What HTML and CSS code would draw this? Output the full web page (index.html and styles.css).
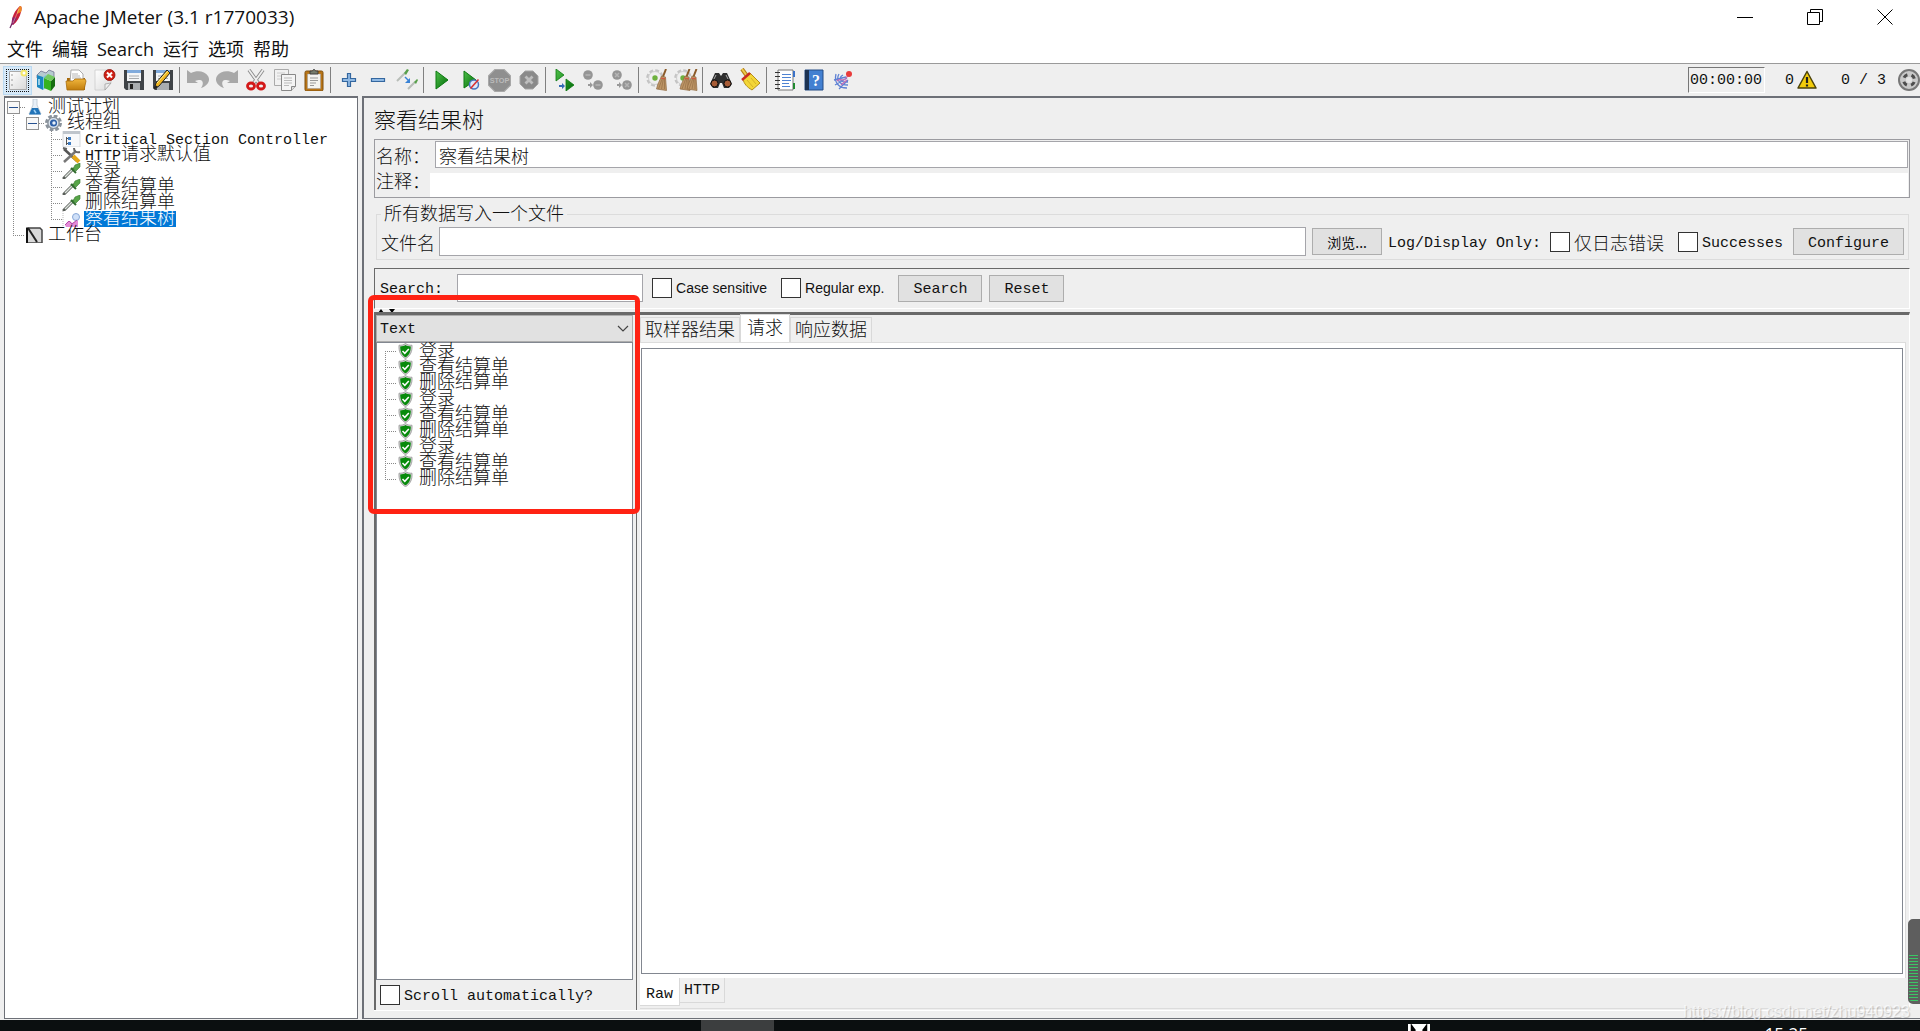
FILE: index.html
```html
<!DOCTYPE html>
<html lang="zh-CN">
<head>
    <meta charset="UTF-8">
    <meta name="viewport" content="width=device-width, initial-scale=1.0">
    <title>Apache JMeter (3.1 r1770033)</title>
    <link rel="stylesheet" href="styles.css">
</head>
<body>
    <!-- Shared icons -->
    <svg class="sprite" aria-hidden="true">
        <defs>
            <linearGradient id="g-green" x1="0" y1="0" x2="1" y2="1"><stop offset="0" stop-color="#4fc04a"/><stop offset="1" stop-color="#016b08"/></linearGradient>
            <linearGradient id="g-gold" x1="0" y1="0" x2="0" y2="1"><stop offset="0" stop-color="#f0b53c"/><stop offset="1" stop-color="#c07d0d"/></linearGradient>
            <linearGradient id="g-page" x1="0" y1="0" x2="1" y2="1"><stop offset="0" stop-color="#fff"/><stop offset="1" stop-color="#d9d9d9"/></linearGradient>
        </defs>
        <symbol id="pipette" viewBox="0 0 19 16">
            <path d="M2 15l9-9" stroke="#5a5f5a" stroke-width="3" stroke-linecap="round"/>
            <path d="M3 14l8-8" stroke="#dfe5df" stroke-width="1.4"/>
            <path d="M9 5l5 5" stroke="#2f6b2c" stroke-width="2"/>
            <path d="M11 6l2-4 5-2v4l-4 4z" fill="#57a548" stroke="#35752d" stroke-width=".6"/>
        </symbol>
        <symbol id="shield" viewBox="0 0 16 16">
            <path d="M8 .5c2 1.500 4 1.800 6.500 1.700C15 8 13 13 8 15.700 3 13 1 8 1.500 2.200 4 2.300 6 2 8 .5z" fill="#ccc" stroke="#999" stroke-width=".8"/>
            <path d="M8 2c1.500 1 3 1.400 5.300 1.400C13.300 8 12 12 8 14.300 4 12 2.700 8 2.700 3.400 5 3.400 6.500 3 8 2z" fill="#078a0b"/>
            <path d="M5 8l2.300 2.300L11.300 6" fill="none" stroke="#fff" stroke-width="1.500"/>
        </symbol>
        <symbol id="gear" viewBox="0 0 20 17">
            <circle cx="10" cy="8.500" r="7.500" fill="none" stroke="#8b939c" stroke-width="3" stroke-dasharray="3.900 1.990"/>
            <circle cx="10" cy="8.500" r="6" fill="#dbe4ee" stroke="#8b939c" stroke-width="1.500"/>
            <circle cx="10" cy="8.500" r="3.800" fill="#2e60a8"/><circle cx="10.500" cy="8.500" r="1.800" fill="#e8f0fa"/>
        </symbol>
        <symbol id="gear-pale" viewBox="0 0 20 20">
            <circle cx="10" cy="10" r="8.200" fill="none" stroke="#c4c4c4" stroke-width="3" stroke-dasharray="4.200 2.240"/>
            <circle cx="10" cy="10" r="7.200" fill="#efefef" stroke="#ccc"/><circle cx="10" cy="10" r="3" fill="#6db13e"/>
        </symbol>
        <symbol id="broom" viewBox="0 0 12 22">
            <path d="M10.500 0L7 9" stroke="#8a5a28" stroke-width="2"/>
            <path d="M6 7l4 1 1 13.500L1 20C2 15 4 12 6 7z" fill="#bd9566" stroke="#8f6a42" stroke-width=".7"/>
            <path d="M7 9L3 20M8 9l-2 11M9 9v11" stroke="#8d6a42" stroke-width=".6"/>
            <path d="M5.500 9l4.500 1" stroke="#d9503a"/>
        </symbol>
        <symbol id="chart" viewBox="0 0 20 20">
            <path d="M3 4c-2 8 2 14 11 14M6 4C3 9 6 15 15 15M10 5c-5 3-3 8 5 7M1 10l12-3M2 15l12-7M6 19l9-9" fill="none" stroke="#5f82d4" stroke-width="1.300"/>
            <path d="M4 11c4-4 7 3 11-6M8 15l6-5" fill="none" stroke="#c76fb4" stroke-width="1.200"/>
            <circle cx="16" cy="4" r="3" fill="#e93b3b"/>
        </symbol>
    </svg>

    <header class="title-bar">
        <svg class="feather" width="16" height="24" viewBox="0 0 16 24"><path d="M2 23L6 14" stroke="#6b2163" stroke-width="1.200"/><path d="M4 19c-1-6 3-14 8-18 2 0 2 3 1 6-1 5-4 10-8 13z" fill="#c8203c"/><path d="M12 1c2 0 2 3 1 6L9 9c0-3 1-6 3-8z" fill="#ee8b22"/><path d="M4 19c-.5-3 0-5 1-7l4 1-4 7z" fill="#8b246e"/><path d="M11 4L5 18" stroke="#f0c6b0" stroke-width=".5"/></svg>
        <span class="title">Apache JMeter (3.1 r1770033)</span>
        <div class="window-buttons">
            <button aria-label="Minimize"><svg width="16" height="16" viewBox="0 0 16 16"><path d="M0 8.500h16" stroke="#000"/></svg></button>
            <button aria-label="Restore"><svg width="16" height="16" viewBox="0 0 16 16"><path d="M.5 3.500h12v12H.5zM3.500 3.500v-3h12v12h-3" fill="none" stroke="#000"/></svg></button>
            <button aria-label="Close"><svg width="16" height="16" viewBox="0 0 16 16"><path d="M.5.5l15 15M15.500.5l-15 15" stroke="#000"/></svg></button>
        </div>
    </header>

    <nav class="menu-bar">
        <button>文件</button>
        <button>编辑</button>
        <button>Search</button>
        <button>运行</button>
        <button>选项</button>
        <button>帮助</button>
    </nav>

    <div class="toolbar">
        <button class="focused" aria-label="New"><svg width="22" height="22" viewBox="0 0 22 22"><path d="M2.500 2.500h17v18h-17z" fill="url(#g-page)" stroke="#aaa"/><path d="M5 5v2M5 10v2M5 15v2" stroke="#999"/><circle cx="17" cy="4" r="3.500" fill="#f5e86b"/><circle cx="17" cy="4" r="1.500" fill="#fff"/></svg></button>
        <button aria-label="Templates"><svg width="22" height="22" viewBox="0 0 22 22"><path d="M1 6l4-4 5 2 3-3 5 2v6H1z" fill="#b7cbd0" stroke="#668" stroke-width=".7"/><path d="M1 6l6 2v13l-6-3z" fill="#1b86c0"/><path d="M7 8l3-2v13l-3 2z" fill="#7bc3e0"/><path d="M8 9l7 3v10l-7-3z" fill="#35b31f"/><path d="M15 12l4-4v9l-4 5z" fill="#176d12"/><path d="M8 9l4-4 7 3-4 4z" fill="#74c960"/><path d="M3 10v6" stroke="#bfe6f5" stroke-width="1.500"/></svg></button>
        <button aria-label="Open"><svg width="22" height="22" viewBox="0 0 22 22"><path d="M2 9h18v12H2z" fill="#a96a0b"/><path d="M6 1h8l4 4v9H5z" fill="#fff" stroke="#aaa"/><path d="M7 5h6M7 7h8M7 9h9" stroke="#b5b5b5"/><path d="M1 12h7l2-2h10l1 2-2 9H2z" fill="url(#g-gold)" stroke="#a86c0c" stroke-width=".8"/></svg></button>
        <button aria-label="Close"><svg width="22" height="22" viewBox="0 0 22 22"><path d="M1 1h16v13l-6 7H1z" fill="url(#g-page)" stroke="#ccc" stroke-width=".8"/><path d="M17 14l-6 7v-6z" fill="#eee" stroke="#999" stroke-width=".7"/><circle cx="15.500" cy="6" r="5.500" fill="#cf1f14" stroke="#8f100a" stroke-width=".8"/><path d="M13 3.500l5 5M18 3.500l-5 5" stroke="#fff" stroke-width="2"/></svg></button>
        <button aria-label="Save"><svg width="22" height="22" viewBox="0 0 22 22"><path d="M1 1h20v20H3l-2-2z" fill="#3f4347"/><path d="M4 1h14v11H4z" fill="#f3f5f7"/><path d="M4 1h14v3H4z" fill="#7faadc"/><path d="M6 7h10M6 9.500h10" stroke="#a6aaae"/><path d="M5 14h12v7H5z" fill="#a9adb0"/><path d="M7 15h3v5H7z" fill="#222"/></svg></button>
        <button aria-label="Save as"><svg width="22" height="22" viewBox="0 0 22 22"><path d="M1 1h20v20H3l-2-2z" fill="#3f4347"/><path d="M4 1h14v11H4z" fill="#f3f5f7"/><path d="M4 1h14v3H4z" fill="#7faadc"/><path d="M6 7h10M6 9.500h10" stroke="#a6aaae"/><path d="M5 14h12v7H5z" fill="#a9adb0"/><path d="M2 20l2-6L15 1l3 3L7 17z" fill="#f0b51f" stroke="#222"/><path d="M5 14L16 2" stroke="#fff08a"/><path d="M2 20l1.500-4L6 18z" fill="#222"/></svg></button>
        <span class="sep"></span>
        <button aria-label="Undo"><svg width="22" height="22" viewBox="0 0 22 22"><path d="M0 1l4 3c6-3 14-2 17 3 3 5-1 10-7 12 3-4 2-8-1-8-2 0-3 0-5 1l3 2H0z" fill="#a8a8a8"/></svg></button>
        <button aria-label="Redo"><svg width="22" height="22" viewBox="0 0 22 22"><path d="M22 1l-4 3C12 1 4 2 1 7c-3 5 1 10 7 12-3-4-2-8 1-8 2 0 3 0 5 1l-3 2h11z" fill="#a8a8a8"/></svg></button>
        <button aria-label="Cut"><svg width="22" height="22" viewBox="0 0 22 22"><path d="M4 1l10 14M18 1L8 15" stroke="#888" stroke-width="3.500"/><path d="M4 1l10 14M18 1L8 15" stroke="#eee" stroke-width="1.800"/><ellipse cx="6" cy="17" rx="3.500" ry="3" fill="none" stroke="#d31919" stroke-width="2.800"/><ellipse cx="16" cy="17" rx="3.500" ry="3" fill="none" stroke="#d31919" stroke-width="2.800"/></svg></button>
        <button aria-label="Copy"><svg width="22" height="22" viewBox="0 0 22 22"><path d="M.5.5h14v16H.5z" fill="#f1f1f1" stroke="#aaa"/><path d="M3 4h8M3 7h8M3 10h8" stroke="#ccc"/><path d="M7.500 5.500h14v12l-4 4h-10z" fill="#f4f4f4" stroke="#888"/><path d="M10 9h8M10 11.500h8M10 14h8M10 16.500h5" stroke="#bbb"/><path d="M21.500 17.500h-4v4" fill="#ddd" stroke="#888"/></svg></button>
        <button aria-label="Paste"><svg width="22" height="22" viewBox="0 0 22 22"><rect x="2" y="2" width="18" height="20" rx="1.500" fill="#b97516" stroke="#80500c"/><path d="M4.500 5h13v14.500h-13z" fill="#f4f4f0" stroke="#999" stroke-width=".5"/><path d="M7 9h8M7 11.500h8M7 14h6M7 16.500h4" stroke="#999"/><path d="M7 5V2h2.500l1-1.500h1l1 1.500H15v3z" fill="#777d6d" stroke="#333" stroke-width=".8"/></svg></button>
        <span class="sep"></span>
        <button aria-label="Expand all"><svg width="16" height="16" viewBox="0 0 16 16"><path d="M6.500 1.500h3v5h5v3h-5v5h-3v-5h-5v-3h5z" fill="#8fb9e4" stroke="#34679f" stroke-width="1.200"/></svg></button>
        <button aria-label="Collapse all"><svg width="16" height="16" viewBox="0 0 16 16"><path d="M1.500 6.500h13v3h-13z" fill="#8fb9e4" stroke="#34679f" stroke-width="1.200"/></svg></button>
        <button aria-label="Toggle"><svg width="22" height="22" viewBox="0 0 22 22"><path d="M1 12l8-8M12 20l7-7" stroke="#b9beb9" stroke-width="2"/><path d="M8 4l3-4 2 1-3 5zM18 13l3-3 1 1-2 4z" fill="#58a04b"/><path d="M9 8l4 4" stroke="#3a83d6" stroke-width="1.500"/><path d="M14 9v5H9z" fill="#3a83d6"/></svg></button>
        <span class="sep"></span>
        <button aria-label="Start"><svg width="20" height="20" viewBox="0 0 20 20"><path d="M4 1l12 9L4 19z" fill="url(#g-green)" stroke="#0c7a10"/></svg></button>
        <button aria-label="Start no pauses"><svg width="20" height="20" viewBox="0 0 20 20"><path d="M3 1l12 9L3 18z" fill="url(#g-green)" stroke="#0c7a10"/><circle cx="13" cy="14.500" r="4.500" fill="#dce8fa" stroke="#4775bf" stroke-width="1.500"/><path d="M9.500 18.500l8-9" stroke="#d93232" stroke-width="1.600"/></svg></button>
        <button aria-label="Stop"><svg width="23" height="23" viewBox="0 0 22 22"><path d="M6.500.5h9l6 6v9l-6 6h-9l-6-6v-9z" fill="#8f8f8f" stroke="#a8a8a8"/><text x="11" y="13.500" class="stop-text">STOP</text></svg></button>
        <button aria-label="Shutdown"><svg width="20" height="20" viewBox="0 0 20 20"><path d="M6 1h8l5 5v8l-5 5H6l-5-5V6z" fill="#8a8a8a" stroke="#a5a5a5"/><path d="M6.500 6.500l7 7M13.500 6.500l-7 7" stroke="#bdbdbd" stroke-width="2.800"/></svg></button>
        <span class="sep"></span>
        <button aria-label="Remote start all"><svg width="22" height="22" viewBox="0 0 22 22"><path d="M3 0l8 6-8 6zM13 10l8 6-8 6z" fill="url(#g-green)" stroke="#0c7a10" stroke-width=".8"/><path d="M6 14v2h3v-2l3 3-3 3v-2H6z" fill="#346bb5"/></svg></button>
        <button aria-label="Remote stop all"><svg width="22" height="22" viewBox="0 0 22 22"><circle cx="6" cy="6" r="4.800" fill="#959595"/><circle cx="16" cy="16" r="4.800" fill="#959595"/><path d="M3.500 6h5M13.500 16h5" stroke="#b5b5b5" stroke-width="1.500"/><path d="M6 13v2h2v-2l3 3-3 3v-2H6z" fill="#999"/></svg></button>
        <button aria-label="Remote shutdown all"><svg width="22" height="22" viewBox="0 0 22 22"><circle cx="6" cy="6" r="4.800" fill="#959595"/><circle cx="16" cy="16" r="4.800" fill="#959595"/><path d="M4 4l4 4M8 4L4 8M14 14l4 4M18 14l-4 4" stroke="#b5b5b5" stroke-width="1.500"/><path d="M6 13v2h2v-2l3 3-3 3v-2H6z" fill="#999"/></svg></button>
        <span class="sep"></span>
        <button aria-label="Clear"><svg width="22" height="24" viewBox="0 0 22 24"><use href="#gear-pale" x="0" y="1" width="18" height="18"/><use href="#broom" x="9" y="1" width="13" height="22"/></svg></button>
        <button aria-label="Clear all"><svg width="24" height="24" viewBox="0 0 24 24"><use href="#gear-pale" x="0" y="1" width="18" height="18"/><use href="#broom" x="5" y="1" width="12" height="22"/><use href="#broom" x="12" y="1" width="12" height="22"/></svg></button>
        <span class="sep"></span>
        <button aria-label="Search"><svg width="24" height="20" viewBox="0 0 24 20"><path d="M1 14L6 3h4l2 3 2-3h4l5 11-3 4h-5l-2-5h-2l-2 5H4z" fill="#2e2e2e"/><circle cx="5.500" cy="13.500" r="3.500" fill="#a85c36" stroke="#111"/><circle cx="18.500" cy="13.500" r="3.500" fill="#a85c36" stroke="#111"/><path d="M7 5l-2 4M17 5l2 4" stroke="#aaa"/></svg></button>
        <button aria-label="Reset search"><svg width="22" height="24" viewBox="0 0 22 24"><path d="M3 1l5 7" stroke="#b77e12" stroke-width="4"/><path d="M3 1l5 7" stroke="#eccb4d" stroke-width="2"/><path d="M4 11l7-6 10 10-8 7c-5-3-8-6-9-11z" fill="#f3d637" stroke="#b58f17"/><path d="M3 12l8-7" stroke="#c92a20" stroke-width="2.500"/><path d="M8 12l6 7M12 10l5 6" stroke="#cfa824" stroke-width=".8"/></svg></button>
        <span class="sep"></span>
        <button aria-label="Function helper"><svg width="22" height="22" viewBox="0 0 22 22"><path d="M4 1h15v20H4z" fill="#fff" stroke="#777"/><path d="M19 2h2v6h-2z" fill="#3a72c8"/><path d="M19 14h2v6h-2z" fill="#228a31"/><path d="M8 5.500h9M8 8.500h9M8 11.500h9M8 14.500h7M8 17.500h8" stroke="#4f83d2"/><path d="M1 3.500h5M1 7.500h5M1 11.500h5M1 15.500h5M1 19.500h5" stroke="#333"/></svg></button>
        <button aria-label="Help"><svg width="20" height="22" viewBox="0 0 20 22"><path d="M1 1h18v20H1z" fill="#4380d1" stroke="#244d86"/><path d="M1 1h4v20H1z" fill="#1c3252"/><text x="12" y="17" class="help-text">?</text></svg></button>
        <button aria-label="What's new"><svg width="20" height="20"><use href="#chart"/></svg></button>

        <div class="status">
            <output class="timer">00:00:00</output>
            <span class="errors">0<svg width="20" height="20" viewBox="0 0 20 20"><path d="M10 1.500L19 18H1z" fill="#f3cc0b" stroke="#4c430a" stroke-width="1.500" stroke-linejoin="round"/><path d="M10 7v6M10 14.500v2" stroke="#222" stroke-width="2.200"/></svg></span>
            <span>0 / 3</span>
            <svg class="indicator" width="22" height="22" viewBox="0 0 22 22"><circle cx="11" cy="11" r="10" fill="#c9c9c9" stroke="#777" stroke-width="2"/><circle cx="11" cy="11" r="5.500" fill="none" stroke="#4d4d4d" stroke-width="3" stroke-dasharray="4.300 4.340" stroke-dashoffset="-2"/><circle cx="11" cy="11" r="3" fill="#e3e3e3"/></svg>
        </div>
    </div>

    <main class="workspace">
        <aside class="plan">
            <ul class="tree">
                <li class="root"><button class="toggle" aria-label="Collapse"></button><i class="stub"></i><svg class="icon" viewBox="0 0 19 16"><path d="M8 0h4v6l4 9H4l4-9z" fill="#e8f0f8" stroke="#b9c4cf" stroke-width=".8"/><path d="M7 9h6l3 6.500H4z" fill="#2274b8"/><path d="M9 11l2 3" stroke="#9fd0f5" stroke-width="1.500"/></svg><span>测试计划</span></li>
                <li><i class="rail short"></i><button class="toggle" aria-label="Collapse"></button><i class="stub"></i><svg class="icon"><use href="#gear"/></svg><span>线程组</span></li>
                <li><i class="rail"></i><i class="branch"></i><svg class="icon" viewBox="0 0 19 16"><path d="M1 0h17v16H1z" fill="#f8f9fb" stroke="#d5d8dc"/><path d="M1 0h17v3H1z" fill="#bfc5cc"/><path d="M4.500 6v8M4.500 7.500h2M4.500 12.500h2" stroke="#555" fill="none"/><path d="M6 6h3v3H6zM6 11h3v3H6z" fill="#3e7cc2"/></svg><span class="latin">Critical Section Controller</span></li>
                <li><i class="rail"></i><i class="branch"></i><svg class="icon" viewBox="0 0 19 16"><path d="M2 2l13 12" stroke="#555" stroke-width="2.500"/><path d="M11 9l6 6" stroke="#e6a817" stroke-width="4"/><path d="M2 15L14 4" stroke="#777" stroke-width="2.500"/><path d="M12 1c0 3 2 5 6 4M1 1l4 1" fill="none" stroke="#666" stroke-width="2"/></svg><span><b class="latin">HTTP</b>请求默认值</span></li>
                <li><i class="rail"></i><i class="branch"></i><svg class="icon"><use href="#pipette"/></svg><span>登录</span></li>
                <li><i class="rail"></i><i class="branch"></i><svg class="icon"><use href="#pipette"/></svg><span>查看结算单</span></li>
                <li><i class="rail"></i><i class="branch"></i><svg class="icon"><use href="#pipette"/></svg><span>删除结算单</span></li>
                <li><i class="rail"></i><i class="branch last"></i><svg class="icon" viewBox="0 0 19 16"><path d="M1 0v16" stroke="#bbb" stroke-dasharray="1 1"/><path d="M3 14c3-5 5-5 7-2l6-3v7H4z" fill="#e48ad8"/><circle cx="14" cy="6" r="3.500" fill="#cfe0f8" stroke="#88a7d8"/><path d="M3 14l4-4 3 3 5-4" fill="none" stroke="#b24ca8"/></svg><span class="selected">察看结果树</span></li>
                <li><i class="branch last root-branch"></i><svg class="icon" viewBox="0 0 19 16"><path d="M2 1h13l2 2v13H2z" fill="#d9d9d9" stroke="#444" stroke-width="1.500"/><path d="M3 1l9 14" stroke="#222" stroke-width="2"/><path d="M2 1v15" stroke="#111" stroke-width="2"/></svg><span>工作台</span></li>
            </ul>
        </aside>

        <section class="editor">
            <h1>察看结果树</h1>
            <div class="naming">
                <label for="name">名称：</label>
                <input id="name" class="field" type="text" value="察看结果树">
            </div>
            <div class="naming comments">
                <label for="comments">注释：</label>
                <input id="comments" type="text">
            </div>

            <fieldset class="file">
                <legend>所有数据写入一个文件</legend>
                <label for="filename">文件名</label>
                <input id="filename" class="field" type="text">
                <button class="btn browse">浏览...</button>
                <span class="latin only">Log/Display Only:</span>
                <label class="check"><input type="checkbox">仅日志错误</label>
                <label class="check latin"><input type="checkbox"><span>Successes</span></label>
                <button class="btn">Configure</button>
            </fieldset>

            <div class="search">
                <label class="latin" for="query"><span>Search:</span></label>
                <input id="query" class="field" type="text">
                <label class="check sans"><input type="checkbox">Case sensitive</label>
                <label class="check sans"><input type="checkbox">Regular exp.</label>
                <button class="btn">Search</button>
                <button class="btn">Reset</button>
            </div>
            <div class="split-handle">
                <svg width="20" height="4" viewBox="0 0 20 4"><path d="M0 4l3-4 3 4zM11 0h6l-3 4z"/></svg>
            </div>

            <div class="results">
                <div class="samples">
                    <div class="renderer">
                        <select aria-label="Renderer"><option>Text</option></select>
                        <svg width="12" height="8" viewBox="0 0 12 8"><path d="M1 1l5 5 5-5" fill="none" stroke="#444" stroke-width="1.200"/></svg>
                    </div>
                    <ul class="tree sample-list">
                        <li><i class="branch first"></i><svg class="icon"><use href="#shield"/></svg><span>登录</span></li>
                        <li><i class="branch"></i><svg class="icon"><use href="#shield"/></svg><span>查看结算单</span></li>
                        <li><i class="branch"></i><svg class="icon"><use href="#shield"/></svg><span>删除结算单</span></li>
                        <li><i class="branch"></i><svg class="icon"><use href="#shield"/></svg><span>登录</span></li>
                        <li><i class="branch"></i><svg class="icon"><use href="#shield"/></svg><span>查看结算单</span></li>
                        <li><i class="branch"></i><svg class="icon"><use href="#shield"/></svg><span>删除结算单</span></li>
                        <li><i class="branch"></i><svg class="icon"><use href="#shield"/></svg><span>登录</span></li>
                        <li><i class="branch"></i><svg class="icon"><use href="#shield"/></svg><span>查看结算单</span></li>
                        <li><i class="branch last"></i><svg class="icon"><use href="#shield"/></svg><span>删除结算单</span></li>
                    </ul>
                    <label class="check latin scroll"><input type="checkbox"><span>Scroll automatically?</span></label>
                </div>

                <div class="detail">
                    <div class="tabs">
                        <button>取样器结果</button>
                        <button class="active">请求</button>
                        <button>响应数据</button>
                    </div>
                    <div class="tab-body">
                        <textarea aria-label="Request" readonly></textarea>
                    </div>
                    <div class="tabs bottom">
                        <button class="active">Raw</button>
                        <button>HTTP</button>
                    </div>
                </div>
                <div class="highlight"></div>
            </div>
        </section>
    </main>

    <footer class="taskbar">
        <span class="task"></span>
        <svg class="tray" width="22" height="7" viewBox="0 0 22 7"><path d="M0 0h22v7H0z" fill="#fff"/><path d="M4 7V3l3 4M18 7V3l-3 4" fill="none" stroke="#000" stroke-width="2.500"/></svg>
        <time class="clock">15:25</time>
    </footer>

    <div class="meter"></div>
    <div class="watermark">https://blog.csdn.net/zhu940923</div>
</body>
</html>
```
FILE: styles.css
```css
* {
    box-sizing: border-box;
}

body {
    margin: 0;
    height: 100vh;
    display: flex;
    flex-direction: column;
    overflow: hidden;
    position: relative;
    background: #efefef;
    color: #111;
    font-family: "Liberation Mono", "Noto Sans CJK SC", monospace;
    font-size: 18px;
    font-weight: 300;
}

button, input, select, textarea {
    font: inherit;
    color: inherit;
    margin: 0;
}

svg {
    flex: none;
}

.sprite {
    position: absolute;
    width: 0;
    height: 0;
}

.latin {
    font-size: 15px;
    font-weight: 400;
}

/* Title and menu */
.title-bar {
    display: flex;
    align-items: center;
    height: 34px;
    flex: none;
    padding-left: 8px;
    background: #fff;
}

.title {
    margin-left: 10px;
    font: 19px/26px "Open Sans", sans-serif;
}

.window-buttons {
    margin-left: auto;
    display: flex;
}

.window-buttons button {
    display: flex;
    justify-content: center;
    align-items: center;
    width: 70px;
    height: 34px;
    padding: 0;
    border: 0;
    background: none;
}

.menu-bar {
    display: flex;
    gap: 9px;
    height: 29px;
    flex: none;
    padding-left: 7px;
    background: #fff;
}

.menu-bar button {
    padding: 0;
    border: 0;
    background: none;
    font: 18px/28px "Open Sans", "Noto Sans CJK SC", sans-serif;
}

/* Toolbar */
.toolbar {
    display: flex;
    align-items: center;
    height: 33px;
    flex: none;
    padding-left: 3px;
    border-top: 1px solid #9a9a9a;
    font-size: 15px;
    font-weight: 400;
}

.toolbar button {
    display: flex;
    justify-content: center;
    align-items: center;
    width: 29px;
    height: 29px;
    padding: 0;
    border: 0;
    background: none;
}

.toolbar .focused {
    background: #d5e8f8;
    border: 1px solid #bbdaf2;
    outline: 1px dotted #111;
    outline-offset: -4px;
}

.sep {
    width: 1px;
    height: 26px;
    margin: 0 3px 0 2px;
    background: #808080;
}

.stop-text {
    font: bold 7px "Liberation Sans", sans-serif;
    text-anchor: middle;
    fill: #bbb;
}

.help-text {
    font: bold 16px "Liberation Serif", serif;
    text-anchor: middle;
    fill: #fff;
}

.status {
    display: flex;
    align-items: center;
    margin-left: auto;
    gap: 20px;
    white-space: pre;
}

.timer {
    padding: 3px 2px 1px 1px;
    line-height: 20px;
    border: 1px solid;
    border-color: #777 #fff #fff #777;
}

.errors {
    display: flex;
    align-items: center;
    gap: 3px;
    margin-right: 4px;
}

.indicator {
    margin-left: -8px;
}

/* Workspace */
.workspace {
    display: flex;
    flex: 1;
    min-height: 0;
    gap: 4px;
    padding: 0 0 1px 4px;
}

.plan {
    flex: 0 0 354px;
    border: 1px solid #6d7077;
    border-top-width: 2px;
    background: #fff;
    overflow: hidden;
}

.tree {
    margin: 0;
    padding: 1px 0 0 8px;
    list-style: none;
    line-height: 17px;
}

.tree li {
    display: flex;
    align-items: center;
    height: 16px;
    white-space: nowrap;
}

.tree li span {
    height: 16px;
    margin-left: 3px;
    padding: 0 1px;
}

.tree li .latin {
    line-height: 20px;
}

.tree b {
    font-weight: 400;
}

.tree .root {
    margin-left: -6px;
}

.icon {
    width: 19px;
    height: 16px;
}

.toggle {
    width: 13px;
    height: 13px;
    padding: 0;
    border: 1px solid #919191;
    background: linear-gradient(#26508f, #26508f) center / 9px 1px no-repeat #f8f8f8;
}

.stub, .rail, .branch {
    flex: none;
    height: 16px;
    background-repeat: no-repeat;
}

.stub {
    width: 5px;
    background-image: repeating-linear-gradient(to right, #888 0 1px, transparent 1px 2px);
    background-size: 100% 1px;
    background-position: 0 50%;
}

.rail {
    width: 38px;
    background-image: repeating-linear-gradient(to bottom, #888 0 1px, transparent 1px 2px);
    background-size: 1px 100%;
}

.rail.short {
    width: 13px;
}

.branch {
    width: 11px;
    background-image: repeating-linear-gradient(to bottom, #888 0 1px, transparent 1px 2px), repeating-linear-gradient(to right, #888 0 1px, transparent 1px 2px);
    background-size: 1px 100%, 100% 1px;
    background-position: 0 0, 0 50%;
}

.branch.last {
    background-size: 1px 50%, 100% 1px;
}

.branch.first {
    background-size: 1px 50%, 100% 1px;
    background-position: 0 100%, 0 50%;
}

.root-branch {
    width: 12px;
}

.selected {
    background: #0078d7;
    color: #fff;
}

/* Editor pane */
.editor {
    flex: 1;
    min-width: 0;
    display: flex;
    flex-direction: column;
    padding: 8px 10px 7px;
    border: 2px solid #6d7077;
    border-width: 2px 0 1px 2px;
}

h1 {
    margin: 0;
    font-size: 22px;
    font-weight: 300;
    line-height: 33px;
}

.naming {
    display: flex;
    align-items: center;
    flex: none;
    height: 30px;
    padding: 0 1px;
    border: 1px solid #9b9ba0;
    border-bottom: 0;
}

.naming label {
    width: 59px;
}

.naming input {
    flex: 1;
    height: 27px;
}

.naming.comments {
    height: 29px;
    border-width: 0 1px 1px;
    border-style: solid;
    border-color: #9b9ba0;
}

.naming.comments label {
    width: 54px;
    line-height: 31px;
}

.comments input {
    border: 0;
    height: 24px;
    align-self: flex-end;
}

.field {
    min-width: 0;
    padding: 0 3px;
    border: 1px solid #a5a5aa;
    background: #fff;
}

.file {
    display: flex;
    align-items: center;
    min-width: 0;
    margin: 5px 1px 8px 2px;
    padding: 2px 4px 3px;
    border: 1px solid #dcdcdc;
}

.file legend {
    padding: 2px 3px 0;
    line-height: 20px;
}

.file .field {
    flex: 1;
    height: 29px;
    margin: 0 6px 0 4px;
}

.btn {
    height: 27px;
    padding: 3px 14px 0;
    border: 1px solid #adadad;
    background: #e1e1e1;
    font-size: 15px;
    font-weight: 400;
}

.file .browse {
    padding-top: 0;
    font: 14px/20px "Noto Sans CJK SC", sans-serif;
}

.only {
    margin: 0 9px 0 6px;
    padding-top: 3px;
}

.check {
    display: flex;
    align-items: center;
    gap: 4px;
    white-space: nowrap;
}

.check span, .search .latin span {
    display: block;
    padding-top: 3px;
}

.check input {
    appearance: none;
    width: 20px;
    height: 20px;
    border: 1px solid #333;
    background: #fff;
}

.file .check {
    margin-right: 14px;
}

.file .check.latin {
    margin-right: 10px;
}

.sans {
    font: 14px "Liberation Sans", Arial, sans-serif;
}

.search {
    display: flex;
    align-items: center;
    flex: none;
    height: 41px;
    padding: 0 5px 1px;
    border: 1px solid;
    border-color: #696969 #fff #fff #696969;
}

.search .field {
    width: 186px;
    height: 28px;
    margin: 0 9px 0 14px;
}

.search .check {
    margin-right: 14px;
}

.search .btn {
    margin-right: 7px;
}

.split-handle {
    display: flex;
    height: 3px;
    flex: none;
    padding-left: 4px;
}

/* Results */
.results {
    position: relative;
    display: flex;
    flex: 1;
    min-height: 0;
    gap: 3px;
    border-top: 3px solid #696969;
    border-right: 1px solid #fff;
    border-bottom: 1px solid #fff;
}

.samples {
    display: flex;
    flex-direction: column;
    flex: 0 0 259px;
    border-left: 2px solid #696969;
}

.renderer {
    position: relative;
    flex: none;
}

.renderer select {
    display: block;
    width: 100%;
    height: 27px;
    padding: 2px 3px 0;
    appearance: none;
    border: 1px solid #adadad;
    border-radius: 0;
    background: #e1e1e1;
    font-size: 15px;
    font-weight: 400;
}

.renderer svg {
    position: absolute;
    right: 4px;
    top: 10px;
    pointer-events: none;
}

.sample-list {
    flex: 1;
    padding: 0 0 0 8px;
    border: 1px solid #828790;
    background: #fff;
}

.sample-list .icon {
    width: 19px;
}

.scroll {
    height: 30px;
    padding-left: 4px;
}

.detail {
    display: flex;
    flex-direction: column;
    flex: 1;
    min-width: 0;
    padding: 0 3px 1px 3px;
    border-left: 1px solid #696969;
}

.tabs {
    display: flex;
    align-items: flex-end;
    flex: none;
    height: 28px;
    border-bottom: 1px solid #dcdcdc;
}

.tabs button {
    height: 25px;
    padding: 2px 4px 0;
    line-height: 22px;
    border: 1px solid #d9d9d9;
    border-bottom: 0;
    background: #f0f0f0;
}

.tabs .active {
    height: 28px;
    padding: 0 6px;
    background: #fff;
}

.tab-body {
    display: flex;
    flex: 1;
    min-height: 0;
    padding: 5px 2px 4px 1px;
    border-right: 1px solid #dcdcdc;
    background: #fff;
}

textarea {
    flex: 1;
    resize: none;
    border: 1px solid #828790;
    background: #fff;
}

.tabs.bottom {
    align-items: flex-start;
    height: 31px;
}

.bottom button {
    font-size: 15px;
    font-weight: 400;
    border-width: 0 1px 1px 0;
    border-style: solid;
    border-color: #d9d9d9;
}

.bottom .active {
    padding-top: 6px;
}

/* Overlays */
.highlight {
    position: absolute;
    left: -6px;
    top: -20px;
    width: 272px;
    height: 219px;
    border: 5px solid #ff2213;
    border-radius: 6px;
}

.meter {
    position: absolute;
    right: 0;
    bottom: 27px;
    width: 12px;
    height: 85px;
    border: solid #5e5e5e;
    border-width: 36px 2px 3px 1px;
    border-radius: 5px 0 0 5px;
    background: repeating-linear-gradient(#3ac765 0 1px, #5e5e5e 1px 3px);
}

.watermark {
    position: absolute;
    right: 10px;
    bottom: 10px;
    color: rgba(255, 255, 255, 0.7);
    font: 16px/18px "Liberation Sans", Arial, sans-serif;
    text-shadow: 1px 1px 1px rgba(0, 0, 0, 0.2);
}

.taskbar {
    display: flex;
    align-items: flex-end;
    flex: none;
    height: 11px;
    padding: 0 112px 0 701px;
    background: #0b0f10;
    overflow: hidden;
}

.task {
    width: 73px;
    height: 11px;
    background: #3c3e3f;
}

.tray {
    margin-left: auto;
}

.clock {
    height: 3px;
    margin-left: 335px;
    color: #fff;
    font: 17px/12px "Open Sans", sans-serif;
}
```
